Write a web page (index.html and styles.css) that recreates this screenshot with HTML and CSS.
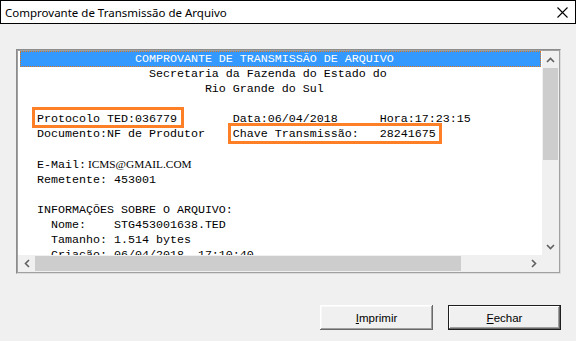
FILE: index.html
```html
<!DOCTYPE html>
<html lang="pt-BR">
<head>
    <meta charset="UTF-8">
    <meta name="viewport" content="width=device-width, initial-scale=1.0">
    <title>Comprovante de Transmissão de Arquivo</title>
    <link rel="stylesheet" href="styles.css">
</head>
<body>
    <div class="janela">
        <div class="titulo">
            <span>Comprovante de Transmissão de Arquivo</span>
            <svg class="fechar-x" width="11" height="11" viewBox="0 0 11 11">
                <path d="M0.5 0.5 L10.5 10.5 M10.5 0.5 L0.5 10.5" stroke="#000" stroke-width="1.1" fill="none"/>
            </svg>
        </div>

        <div class="visor">
            <div class="visor-grade">
                <div class="documento">
                    <div class="doc-cabecalho">              COMPROVANTE DE TRANSMISSÃO DE ARQUIVO</div>
<pre class="doc-texto">                Secretaria da Fazenda do Estado do
                        Rio Grande do Sul

<span class="marca marca-protocolo">Protocolo TED:036779</span>        Data:06/04/2018      Hora:17:23:15
Documento:NF de Produtor    <span class="marca marca-chave">Chave Transmissão:   28241675</span>

E-Mail:<span class="serifa">ICMS@GMAIL.COM</span>
Remetente: 453001

INFORMAÇÕES SOBRE O ARQUIVO:
  Nome:    STG453001638.TED
  Tamanho: 1.514 bytes
  Criação: 06/04/2018  17:10:40</pre>
                </div>
                <div class="rolagem-v">
                    <div class="seta">
                        <svg width="9" height="6" viewBox="0 0 9 6"><path d="M1 5 L4.5 1.5 L8 5" stroke="#606060" stroke-width="1.6" fill="none"/></svg>
                    </div>
                    <div class="polegar-v"></div>
                    <div class="espaco"></div>
                    <div class="seta">
                        <svg width="9" height="6" viewBox="0 0 9 6"><path d="M1 1 L4.5 4.5 L8 1" stroke="#606060" stroke-width="1.6" fill="none"/></svg>
                    </div>
                </div>
                <div class="rolagem-h">
                    <div class="seta">
                        <svg width="6" height="9" viewBox="0 0 6 9"><path d="M5 1 L1.5 4.5 L5 8" stroke="#606060" stroke-width="1.6" fill="none"/></svg>
                    </div>
                    <div class="polegar-h"></div>
                    <div class="espaco"></div>
                    <div class="seta">
                        <svg width="6" height="9" viewBox="0 0 6 9"><path d="M1 1 L4.5 4.5 L1 8" stroke="#606060" stroke-width="1.6" fill="none"/></svg>
                    </div>
                </div>
                <div class="canto"></div>
            </div>
        </div>

        <div class="botoes">
            <button class="botao"><u>I</u>mprimir</button>
            <button class="botao botao-padrao"><u>F</u>echar</button>
        </div>
    </div>
</body>
</html>
```

FILE: styles.css
```css
body {
    margin: 0;
    background-color: #f0f0f0;
}
.janela {
    width: 576px;
    height: 341px;
    background-color: #f0f0f0;
    overflow: hidden;
}
.titulo {
    height: 22px;
    border: 1px solid #000;
    background: #fff;
    display: flex;
    align-items: center;
    justify-content: space-between;
    padding: 0 7px 0 4px;
    font-family: "Noto Sans", "Open Sans", sans-serif;
    font-size: 11.5px;
    color: #000;
}
.fechar-x {
    display: block;
    margin-top: 1px;
}

/* caixa de texto com rolagem */
.visor {
    margin: 25px 0 0 16px;
    width: 541px;
    height: 221px;
    border-style: solid;
    border-width: 2px;
    border-color: #8c8c8c #dcdcdc #dcdcdc #8c8c8c;
    box-shadow: inset 0 0 0 0 transparent, 0 0 0 0 transparent;
    outline: 1px solid #a0a0a0;
    outline-offset: -2px;
}
.visor-grade {
    height: 100%;
    display: grid;
    grid-template-columns: 1fr 17px;
    grid-template-rows: 1fr 17px;
    background: #fff;
}
.documento {
    overflow: hidden;
    font-family: "Liberation Mono", "Courier New", monospace;
    font-size: 11.667px;
    color: #000;
}
.doc-cabecalho {
    margin: 0 1px 0 2px;
    height: 14px;
    line-height: 14px;
    padding-left: 16px;
    white-space: pre;
    background-color: #3399ff;
    color: #fff;
    border: 1px dotted #e0761c;
}
.doc-texto {
    margin: 0;
    padding-left: 19px;
    font-family: inherit;
    font-size: inherit;
    line-height: 15px;
}
.serifa {
    font-family: "Liberation Serif", "Times New Roman", serif;
    font-size: 11.3px;
    margin-left: 2px;
}
.marca {
    display: inline-block;
    position: relative;
    height: 15px;
}
.marca::after {
    content: '';
    position: absolute;
    border: 3px solid #ff7f27;
}
.marca-protocolo::after {
    left: -5px;
    right: -7px;
    top: -5px;
    bottom: -1px;
}
.marca-chave::after {
    left: -5px;
    right: -6px;
    top: -4px;
    bottom: -2px;
}

.rolagem-v, .rolagem-h {
    background: #f0f0f0;
    display: flex;
}
.rolagem-v {
    flex-direction: column;
}
.seta {
    flex: 0 0 17px;
    height: 17px;
    display: flex;
    align-items: center;
    justify-content: center;
}
.rolagem-h .seta {
    width: 17px;
}
.polegar-v {
    height: 92px;
    margin: 0 1px;
    background: #cdcdcd;
}
.polegar-h {
    width: 426px;
    margin: 1px 0;
    background: #cdcdcd;
}
.espaco {
    flex: 1;
}
.canto {
    background: #f0f0f0;
}

/* botões */
.botoes {
    display: flex;
    justify-content: flex-end;
    gap: 15px;
    padding-right: 15px;
    margin-top: 31px;
}
.botao {
    width: 113px;
    height: 25px;
    padding: 0;
    border: none;
    background: #f0f0f0;
    font-family: "Liberation Sans", Arial, sans-serif;
    font-size: 11.5px;
    color: #000;
    box-shadow: inset -1px -1px #696969, inset 1px 1px #fff, inset -2px -2px #a0a0a0, inset 2px 2px #f8f8f8;
}
.botao-padrao {
    border: 1px solid #1e1e1e;
    box-shadow: inset -1px -1px #696969, inset 1px 1px #fff, inset -2px -2px #a0a0a0;
}
```
